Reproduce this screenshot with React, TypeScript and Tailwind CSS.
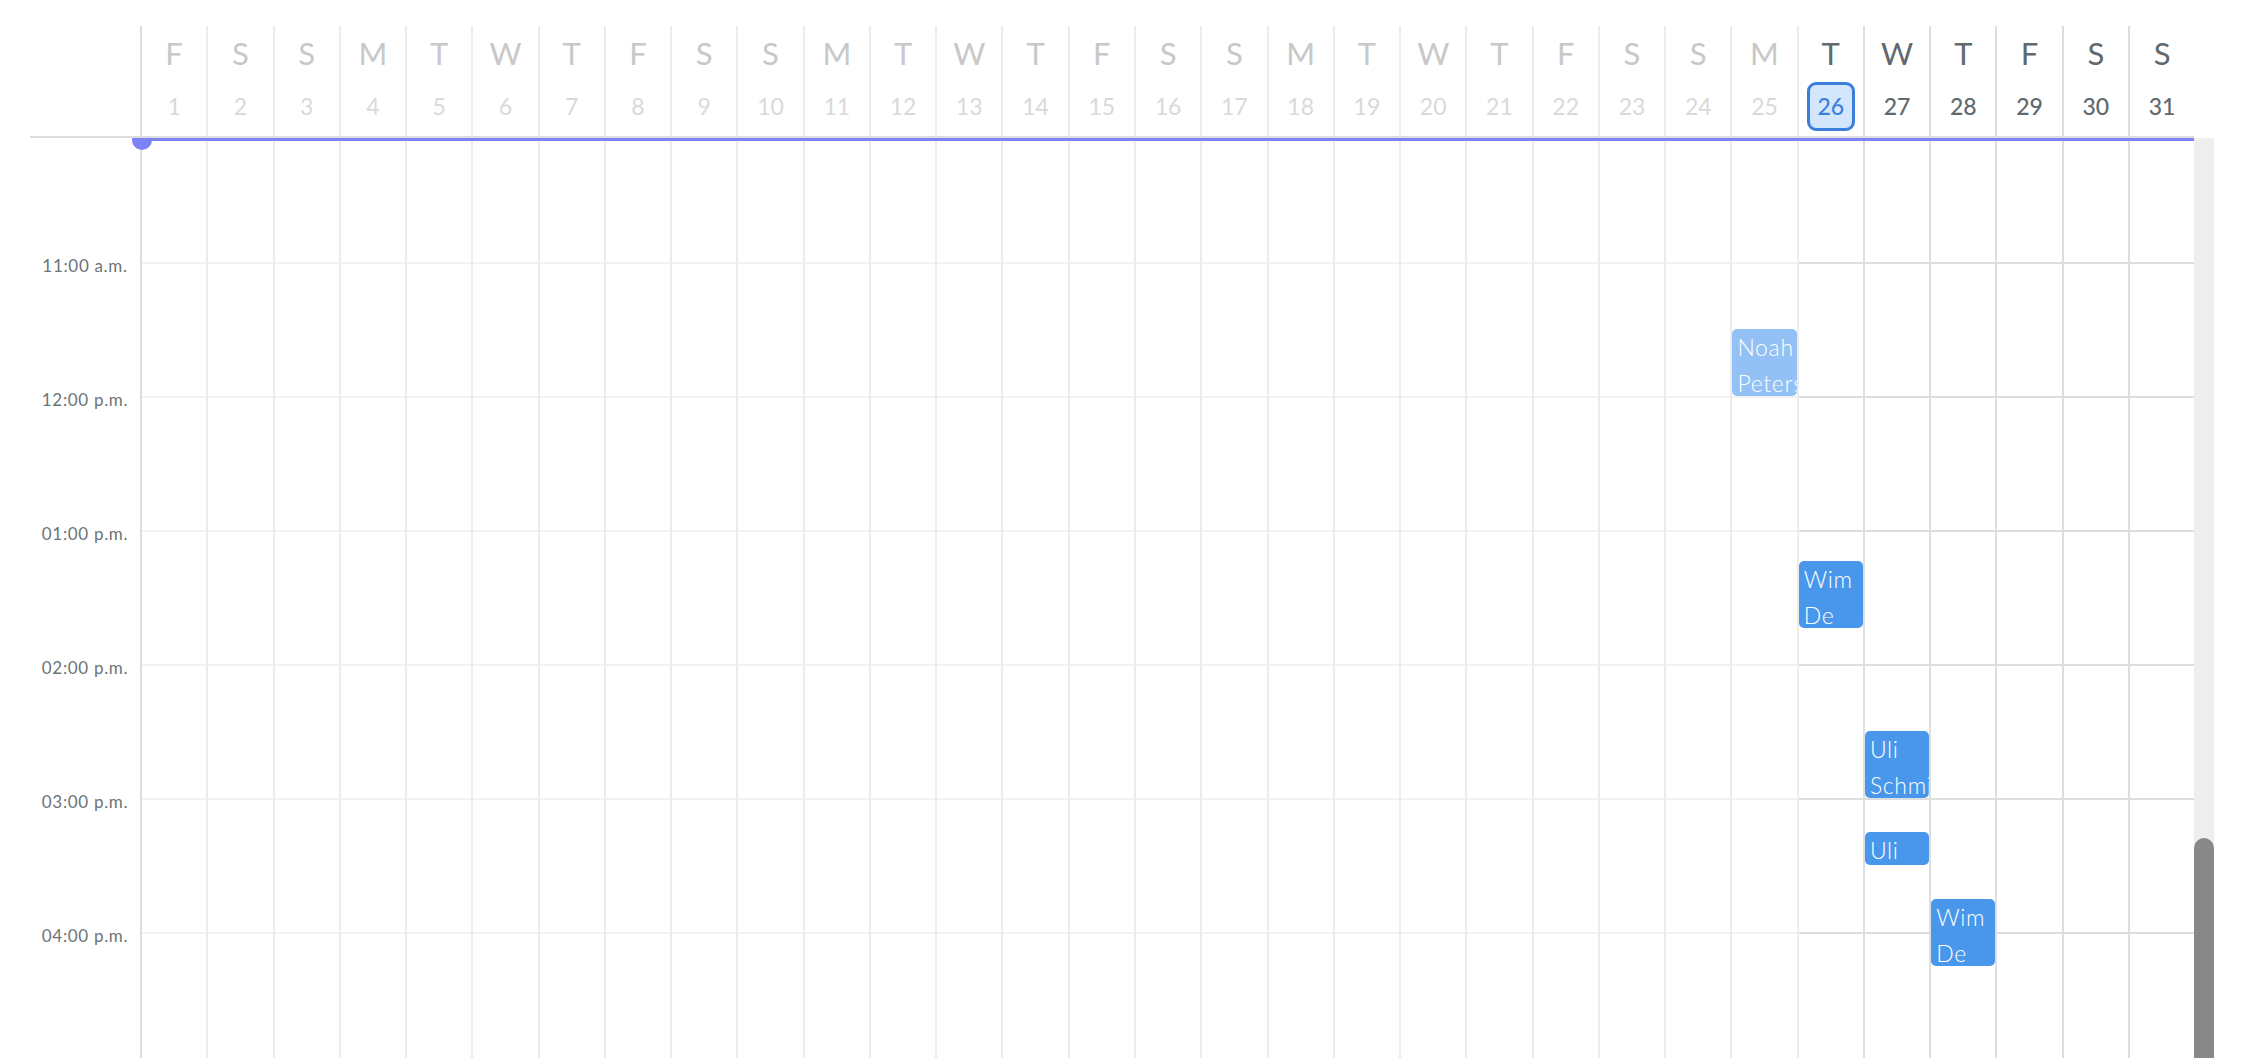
// Month grid, one column per day, scrolled so that "now" (10:04 on the 26th) sits at the top.
const HOUR_PX = 134;
const TODAY = 26;
const FIRST_HOUR = 10;

const LETTERS = ['F', 'S', 'S', 'M', 'T', 'W', 'T'];
const DAYS = Array.from({ length: 31 }, (_, i) => ({
  date: i + 1,
  letter: LETTERS[i % 7],
}));

const HOURS = Array.from({ length: 7 }, (_, i) => FIRST_HOUR + i);

function hourLabel(h: number) {
  const suffix = h < 12 ? 'a.m.' : 'p.m.';
  const h12 = h % 12 === 0 ? 12 : h % 12;
  return `${String(h12).padStart(2, '0')}:00 ${suffix}`;
}

type CalEvent = { day: number; start: number; minutes: number; title: string };

// start is in minutes from midnight
const EVENTS: CalEvent[] = [
  { day: 25, start: 11 * 60 + 30, minutes: 30, title: 'Noah Peterson' },
  { day: 26, start: 13 * 60 + 14, minutes: 30, title: 'Wim De Smet' },
  { day: 27, start: 14 * 60 + 30, minutes: 30, title: 'Uli Schmidt' },
  { day: 27, start: 15 * 60 + 15, minutes: 15, title: 'Uli Schmidt' },
  { day: 28, start: 15 * 60 + 45, minutes: 30, title: 'Wim De Smet' },
];

const minutesToPx = (m: number) => ((m - FIRST_HOUR * 60) / 60) * HOUR_PX;

export default function App() {
  return (
    <div className="flex h-screen flex-col overflow-hidden bg-white pl-[30px] pr-[38px] pt-[26px] font-[family-name:Lato,sans-serif]">
      {/* header */}
      <div className="mr-[20px] flex shrink-0 border-b-2 border-[#dedede]">
        <div className="w-[112px] shrink-0 border-r-2 border-[#dedede]" />
        {DAYS.map((d) => {
          const past = d.date < TODAY;
          const isToday = d.date === TODAY;
          const last = d.date === DAYS.length;
          return (
            <div
              key={d.date}
              className={`flex h-[110px] min-w-0 flex-1 flex-col items-center ${
                last ? '' : 'border-r-2'
              } ${past ? 'border-[#ececec]' : 'border-[#dedede]'}`}
            >
              <div
                className={`flex h-[54px] items-center text-[31px] leading-none ${
                  past ? 'text-[#c8c8c8]' : 'text-[#5f696e]'
                }`}
              >
                {d.letter}
              </div>
              <div
                className={`mt-[2px] flex h-[49px] w-[48px] items-center justify-center rounded-[9px] text-[23px] leading-none ${
                  isToday
                    ? 'border-[3px] border-[#3b7fdd] bg-[#d3e6fb] font-medium text-[#3b7fdd]'
                    : past
                      ? 'text-[#d9d9d9]'
                      : 'font-medium text-[#5f696e]'
                }`}
              >
                {d.date}
              </div>
            </div>
          );
        })}
      </div>

      {/* body */}
      <div className="flex min-h-0 flex-1">
        <div className="min-w-0 flex-1 overflow-hidden">
          <div className="relative -mt-[10px] flex">
            <div className="w-[112px] shrink-0 border-r-2 border-[#dedede]">
              {HOURS.map((h) => (
                <div key={h} className="h-[134px]">
                  <span className="block -translate-y-[6px] text-center text-[17px] leading-[20px] tracking-[0.04em] text-[#6b7479]">
                    {hourLabel(h)}
                  </span>
                </div>
              ))}
            </div>

            {DAYS.map((d) => {
              const past = d.date < TODAY;
              const last = d.date === DAYS.length;
              return (
                <div
                  key={d.date}
                  className={`relative min-w-0 flex-1 ${last ? '' : 'border-r-2'} ${
                    past ? 'border-[#ececec]' : 'border-[#dedede]'
                  }`}
                >
                  {HOURS.map((h) => (
                    <div
                      key={h}
                      className={`h-[134px] border-t-2 ${past ? 'border-[#f2f2f2]' : 'border-[#dedede]'}`}
                    />
                  ))}
                  {EVENTS.filter((e) => e.day === d.date).map((e, i) => (
                    <div
                      key={i}
                      className={`absolute left-0 right-0 overflow-hidden rounded-[5px] px-[5px] text-[23px] font-light leading-[36px] tracking-[0.03em] text-white ${
                        past ? 'bg-[#94c1f5]' : 'bg-[#4897ea]'
                      }`}
                      style={{
                        top: minutesToPx(e.start),
                        height: (e.minutes / 60) * HOUR_PX,
                      }}
                    >
                      {e.title}
                    </div>
                  ))}
                </div>
              );
            })}

            {/* now indicator */}
            <div className="absolute left-[112px] right-0 top-[10px] h-[3px] bg-[#7c83f5]">
              <div className="absolute -left-[10px] -top-[8.5px] h-[20px] w-[20px] rounded-full bg-[#7c83f5]" />
            </div>
          </div>
        </div>

        {/* scrollbar */}
        <div className="relative w-[20px] shrink-0 overflow-hidden bg-[#eeeeee]">
          <div className="absolute left-0 right-0 top-[700px] h-[400px] rounded-full bg-[#888888]" />
        </div>
      </div>
    </div>
  );
}
